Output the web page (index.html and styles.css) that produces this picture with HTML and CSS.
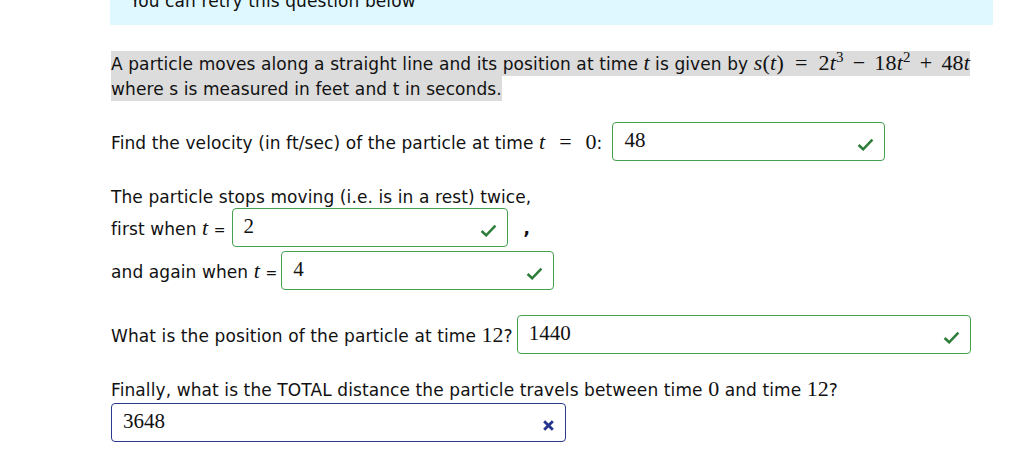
FILE: index.html
```html
<!DOCTYPE html>
<html>
<head>
<meta charset="utf-8">
<link rel="stylesheet" href="styles.css">
</head>
<body>
<div class="page">
  <div class="banner"><div class="banner-text">You can retry this question below</div></div>

  <p class="problem"><span class="hl">A particle moves along a straight line and its position at time <i class="m">t</i> is given by <span class="m sp"><i>s</i>(<i>t</i>)<span class="rel">=</span>2<i>t</i><sup>3</sup><span class="bin">−</span>18<i>t</i><sup>2</sup><span class="bin">+</span>48<i>t</i></span></span><br><span class="hl">where s is measured in feet and t in seconds.</span></p>

  <div class="row r1">
    <span>Find the velocity (in ft/sec) of the particle at time <span class="m"><i>t</i><span class="rel">=</span>0</span>:</span>
    <div class="ans ok w272"><span class="val">48</span><svg class="ic" viewBox="0 0 16 12"><path d="M1.5 6.5 L5.8 10.5 L14.5 1.5" fill="none" stroke="#2e7d3a" stroke-width="2.4"/></svg></div>
  </div>

  <p class="line l2">The particle stops moving (i.e. is in a rest) twice,</p>
  <div class="row r2">
    <span>first when <i class="m">t</i> <span class="eq">=</span></span>
    <div class="ans ok w275"><span class="val">2</span><svg class="ic" viewBox="0 0 16 12"><path d="M1.5 6.5 L5.8 10.5 L14.5 1.5" fill="none" stroke="#2e7d3a" stroke-width="2.4"/></svg></div>
    <span class="comma">,</span>
  </div>
  <div class="row r3">
    <span>and again when <i class="m">t</i> <span class="eq">=</span></span>
    <div class="ans ok w273"><span class="val">4</span><svg class="ic" viewBox="0 0 16 12"><path d="M1.5 6.5 L5.8 10.5 L14.5 1.5" fill="none" stroke="#2e7d3a" stroke-width="2.4"/></svg></div>
  </div>

  <div class="row r4">
    <span>What is the position of the particle at time <span class="m">12</span>?</span>
    <div class="ans ok w453"><span class="val">1440</span><svg class="ic" viewBox="0 0 16 12"><path d="M1.5 6.5 L5.8 10.5 L14.5 1.5" fill="none" stroke="#2e7d3a" stroke-width="2.4"/></svg></div>
  </div>

  <p class="line l5">Finally, what is the TOTAL distance the particle travels between time <span class="m">0</span> and time <span class="m">12</span>?</p>
  <div class="ans bad w454"><span class="val">3648</span><svg class="ic x" viewBox="0 0 12 12"><path d="M2 2 L10 10 M10 2 L2 10" fill="none" stroke="#25348c" stroke-width="2.6"/></svg></div>
</div>
</body>
</html>
```

FILE: styles.css
```css
html, body {
  margin: 0;
  padding: 0;
  background: #fff;
}
body {
  font-family: "DejaVu Sans", Verdana, sans-serif;
  font-size: 17px;
  letter-spacing: 0.1px;
  color: #111;
}
.page {
  padding-left: 111px;
  width: 882px;
}
.banner {
  margin-left: -1px;
  height: 25px;
  background: #dff8ff;
  overflow: hidden;
}
.banner-text {
  padding-left: 20px;
  margin-top: -11px;
  line-height: 24px;
}
.problem {
  margin: 25px 0 0 0;
  line-height: 25px;
}
.hl {
  background: #dcdcdc;
  padding: 3px 0 2px;
}
.m {
  font-family: "Liberation Serif", "DejaVu Serif", serif;
  font-size: 22px;
  font-style: normal;
  letter-spacing: 0;
}
.m i, i.m {
  font-style: italic;
}
.sp { letter-spacing: 0.2px; }
.rel { margin: 0 11px; }
.r1 .rel { margin: 0 14px; }
.bin { margin: 0 9px; }
.eq { font-size: 14px; }
sup {
  font-size: 15px;
  line-height: 0;
}
.row {
  display: flex;
  align-items: center;
}
.r1 { margin-top: 20px; }
.r1 .ans { margin-left: 10px; }
.l2 { margin: 24px 0 0 0; line-height: 25px; }
.r2 { margin-top: -2px; }
.r2 .ans { margin-left: 6px; }
.comma { margin-left: 16px; font-weight: bold; }
.r3 { margin-top: 4px; }
.r3 .ans { margin-left: 4px; }
.r4 { margin-top: 25px; }
.r4 .ans { margin-left: 4px; }
.l5 { margin: 22px 0 0 0; line-height: 25px; }
.ans {
  box-sizing: border-box;
  height: 39px;
  border-radius: 4px;
  display: flex;
  align-items: center;
  justify-content: space-between;
  padding: 0 10px 0 11px;
}
.ok { border: 1px solid #45a050; }
.bad { border: 1px solid #2a3a8e; }
.val {
  font-family: "Liberation Serif", "DejaVu Serif", serif;
  font-size: 21px;
  letter-spacing: 0;
  margin-top: -2px;
}
.ic { width: 17px; height: 13px; margin-top: 6px; }
.ic.x { width: 13px; height: 13px; }
.w272 { width: 273px; }
.w275 { width: 276px; }
.w273 { width: 273px; }
.w453 { width: 454px; }
.w454 { width: 455px; }
```
